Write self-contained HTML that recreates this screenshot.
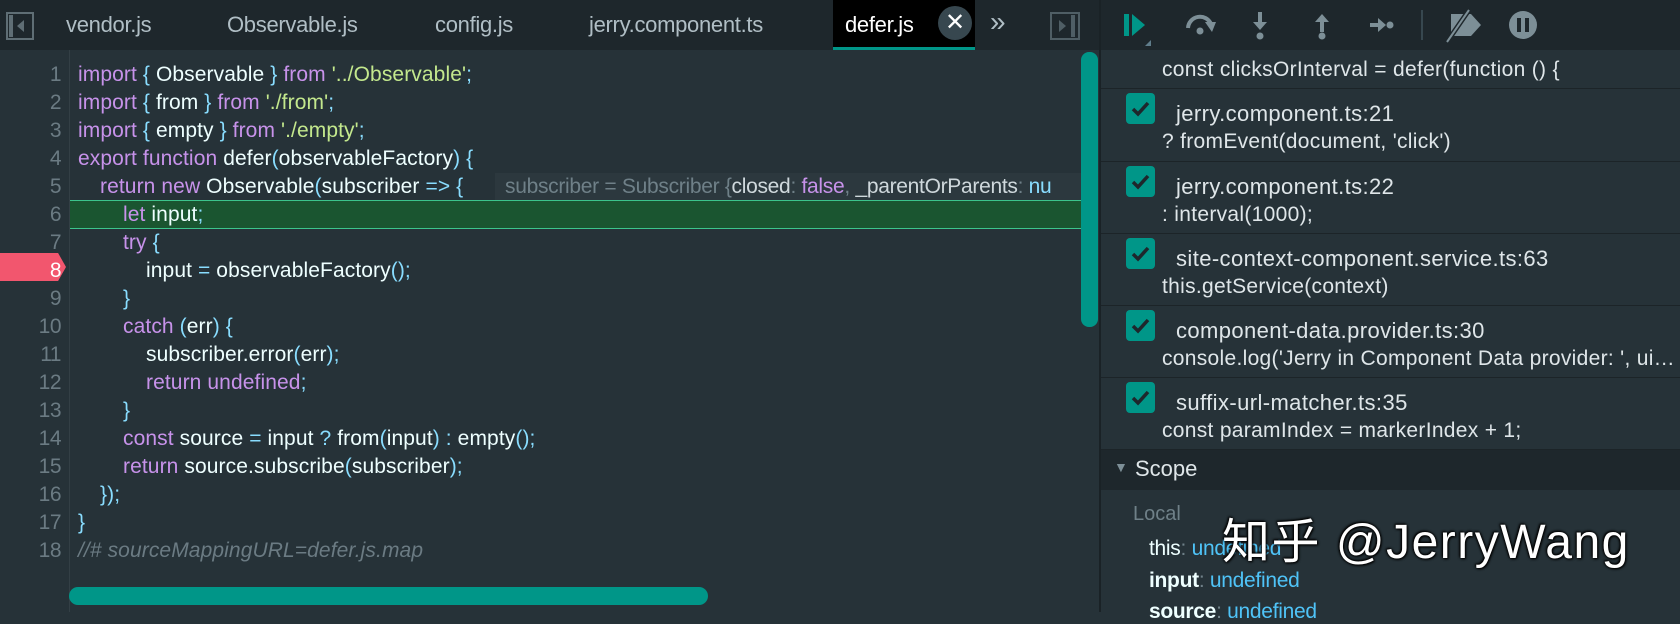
<!DOCTYPE html>
<html><head><meta charset="utf-8"><style>
*{margin:0;padding:0;box-sizing:border-box}
body{width:1680px;height:612px;overflow:hidden;background:#263238;font-family:"Liberation Sans",sans-serif;position:relative;color:#eeffff}
.abs{position:absolute}
#tabs{left:0;top:0;width:1099px;height:50px;background:#1e272c}
.tab{position:absolute;top:12px;font-size:22px;color:#b0bec5;letter-spacing:-0.3px}
#active{left:833px;top:0;width:142px;height:50px;background:#000;border-bottom:3px solid #009688}
#code{left:0;top:50px;width:1099px;height:562px;background:#263238}
.ln{position:absolute;left:0;width:61px;text-align:right;font-size:21px;color:#6b7b83;letter-spacing:-0.5px}
.cl{position:absolute;left:78px;font-size:21px;white-space:pre;letter-spacing:0.1px;color:#eeffff}
.k{color:#c792ea}.s{color:#c3e88d}.p{color:#89ddff}.c{color:#6b7b83;font-style:italic}
#right{left:1099px;top:0;width:581px;height:612px;background:#263238;border-left:2px solid #1a2226}
.row{position:absolute;left:0;width:581px;border-top:1px solid #1c2428}
.cb{position:absolute;left:25px;width:29px;height:31px;background:#009688;border-radius:4px}
.t1{position:absolute;left:75px;font-size:22px;color:#dfe6e9;white-space:nowrap;letter-spacing:0.4px}
.t2{position:absolute;left:61px;font-size:21px;color:#dfe6e9;white-space:nowrap;letter-spacing:0.3px}
</style></head><body>
<div id="tabs" class="abs">
 <svg class="abs" style="left:6px;top:12px" width="28" height="28"><rect x="1" y="1" width="26" height="26" fill="none" stroke="#5f6e75" stroke-width="2"/><rect x="3" y="3" width="4" height="22" fill="#5f6e75"/><path d="M18 8 L11 14 L18 20Z" fill="#5f6e75"/></svg>
 <div class="tab" style="left:66px">vendor.js</div>
 <div class="tab" style="left:227px">Observable.js</div>
 <div class="tab" style="left:435px">config.js</div>
 <div class="tab" style="left:589px">jerry.component.ts</div>
 <div id="active" class="abs">
  <div class="tab" style="left:12px;color:#fff">defer.js</div>
  <div class="abs" style="left:105px;top:6px;width:34px;height:34px;border-radius:50%;background:#37474f;color:#fff;font-size:24px;text-align:center;line-height:33px">✕</div>
 </div>
 <div class="tab" style="left:990px;top:6px;font-size:28px;color:#b0bec5">»</div>
 <svg class="abs" style="left:1050px;top:12px" width="30" height="28"><rect x="1" y="1" width="28" height="26" fill="none" stroke="#4f5e65" stroke-width="2"/><rect x="21" y="3" width="4" height="22" fill="#4f5e65"/><path d="M9 8 L16 14 L9 20Z" fill="#4f5e65"/></svg>
</div>
<div id="code" class="abs">
 <div class="abs" style="left:69px;top:0;width:1px;height:562px;background:#333f45"></div>
 <div class="abs" style="left:495px;top:123px;width:590px;height:28px;background:#2c383e"></div>
 <div class="abs" style="left:70px;top:150px;width:1011px;height:29px;background:#1a5530;border-top:1px solid #3cc48c;border-bottom:1px solid #3cc48c"></div>
 <div class="abs" style="left:0;top:203px;width:66px;height:28px;background:#f2566e;clip-path:polygon(0 0,88% 0,100% 50%,88% 100%,0 100%)"></div>
 <div class="abs" style="left:1081px;top:2px;width:17px;height:275px;background:#009688;border-radius:8px"></div>
 <div class="abs" style="left:69px;top:537px;width:639px;height:18px;background:#009688;border-radius:9px"></div>
</div>
<div id="lines">
<div class="ln" style="top:63px">1</div><div class="cl" style="top:63px"><span class="k">import</span> <span class="p">{</span> Observable <span class="p">}</span> <span class="k">from</span> <span class="s">'../Observable'</span><span class="p">;</span></div>
<div class="ln" style="top:91px">2</div><div class="cl" style="top:91px"><span class="k">import</span> <span class="p">{</span> from <span class="p">}</span> <span class="k">from</span> <span class="s">'./from'</span><span class="p">;</span></div>
<div class="ln" style="top:119px">3</div><div class="cl" style="top:119px"><span class="k">import</span> <span class="p">{</span> empty <span class="p">}</span> <span class="k">from</span> <span class="s">'./empty'</span><span class="p">;</span></div>
<div class="ln" style="top:147px">4</div><div class="cl" style="top:147px"><span class="k">export function</span> defer<span class="p">(</span>observableFactory<span class="p">) {</span></div>
<div class="ln" style="top:175px">5</div><div class="cl" style="top:175px;left:100px"><span class="k">return new</span> Observable<span class="p">(</span>subscriber <span class="p">=&gt; {</span></div>
<div class="cl" style="top:175px;left:505px;color:#6f8088;letter-spacing:-0.3px">subscriber = Subscriber <span class="p" style="color:#6f8088">{</span><span style="color:#cfd8dc">closed</span>: <span class="k">false</span>, <span style="color:#cfd8dc">_parentOrParents</span>: <span style="color:#89ddff">nu</span></div>
<div class="ln" style="top:203px">6</div><div class="cl" style="top:203px;left:123px"><span class="k">let</span> input<span class="p">;</span></div>
<div class="ln" style="top:231px">7</div><div class="cl" style="top:231px;left:123px"><span class="k">try</span> <span class="p">{</span></div>
<div class="ln" style="top:259px;color:#fff">8</div><div class="cl" style="top:259px;left:146px">input <span class="p">=</span> observableFactory<span class="p">();</span></div>
<div class="ln" style="top:287px">9</div><div class="cl" style="top:287px;left:123px"><span class="p">}</span></div>
<div class="ln" style="top:315px">10</div><div class="cl" style="top:315px;left:123px"><span class="k">catch</span> <span class="p">(</span>err<span class="p">) {</span></div>
<div class="ln" style="top:343px">11</div><div class="cl" style="top:343px;left:146px">subscriber.error<span class="p">(</span>err<span class="p">);</span></div>
<div class="ln" style="top:371px">12</div><div class="cl" style="top:371px;left:146px"><span class="k">return undefined</span><span class="p">;</span></div>
<div class="ln" style="top:399px">13</div><div class="cl" style="top:399px;left:123px"><span class="p">}</span></div>
<div class="ln" style="top:427px">14</div><div class="cl" style="top:427px;left:123px"><span class="k">const</span> source <span class="p">=</span> input <span class="p">?</span> from<span class="p">(</span>input<span class="p">) :</span> empty<span class="p">();</span></div>
<div class="ln" style="top:455px">15</div><div class="cl" style="top:455px;left:123px"><span class="k">return</span> source.subscribe<span class="p">(</span>subscriber<span class="p">);</span></div>
<div class="ln" style="top:483px">16</div><div class="cl" style="top:483px;left:100px"><span class="p">});</span></div>
<div class="ln" style="top:511px">17</div><div class="cl" style="top:511px"><span class="p">}</span></div>
<div class="ln" style="top:539px">18</div><div class="cl c" style="top:539px">//# sourceMappingURL=defer.js.map</div>
</div>
<div id="right" class="abs">
 <div class="abs" style="left:0;top:0;width:581px;height:50px;background:#1e272c"></div>
 <svg class="abs" style="left:0;top:0" width="581" height="50">
  <g fill="#009688"><rect x="23" y="14" width="5" height="22"/><path d="M31 14 L44 25 L31 36Z"/><path d="M50 40 L44 46 L50 46Z" fill="#607d8b"/></g>
  <g fill="none" stroke="#7d8f97" stroke-width="4"><path d="M87 28 A12 12 0 0 1 110 24"/></g><path d="M104 22 L115 22 L111 32Z" fill="#7d8f97"/><circle cx="99" cy="31" r="3.5" fill="#7d8f97"/>
  <g fill="#7d8f97"><rect x="157" y="12" width="4" height="12"/><path d="M152 22 L166 22 L159 30Z"/><circle cx="159" cy="36" r="3.5"/>
  <rect x="219" y="20" width="4" height="12"/><path d="M214 22 L228 22 L221 14Z"/><circle cx="221" cy="36" r="3.5"/>
  <rect x="269" y="23" width="10" height="4"/><path d="M277 18 L285 25 L277 32Z"/><circle cx="289" cy="25" r="3.5"/></g>
  <rect x="320" y="10" width="2" height="30" fill="#37474f"/>
  <path d="M350 14 L370 14 L380 25 L370 36 L350 36Z" fill="#7d8f97"/><path d="M346 42 L368 10" stroke="#1e272c" stroke-width="5"/><path d="M346 42 L368 10" stroke="#7d8f97" stroke-width="2"/>
  <circle cx="422" cy="25" r="14" fill="#7d8f97"/><rect x="416" y="18" width="4" height="14" fill="#1e272c"/><rect x="424" y="18" width="4" height="14" fill="#1e272c"/>
 </svg>
 <div class="t2" style="top:58px">const clicksOrInterval = defer(function () {</div>
 <div class="row" style="top:88px;height:73px"><div class="cb" style="top:4px"><svg width="29" height="31"><path d="M7 16 L12 21 L22 10" fill="none" stroke="#1e272c" stroke-width="3.5"/></svg></div><div class="t1" style="top:12px">jerry.component.ts:21</div><div class="t2" style="top:41px">? fromEvent(document, 'click')</div></div>
 <div class="row" style="top:161px;height:72px"><div class="cb" style="top:4px"><svg width="29" height="31"><path d="M7 16 L12 21 L22 10" fill="none" stroke="#1e272c" stroke-width="3.5"/></svg></div><div class="t1" style="top:12px">jerry.component.ts:22</div><div class="t2" style="top:41px">: interval(1000);</div></div>
 <div class="row" style="top:233px;height:72px"><div class="cb" style="top:4px"><svg width="29" height="31"><path d="M7 16 L12 21 L22 10" fill="none" stroke="#1e272c" stroke-width="3.5"/></svg></div><div class="t1" style="top:12px">site-context-component.service.ts:63</div><div class="t2" style="top:41px">this.getService(context)</div></div>
 <div class="row" style="top:305px;height:72px"><div class="cb" style="top:4px"><svg width="29" height="31"><path d="M7 16 L12 21 L22 10" fill="none" stroke="#1e272c" stroke-width="3.5"/></svg></div><div class="t1" style="top:12px">component-data.provider.ts:30</div><div class="t2" style="top:41px">console.log('Jerry in Component Data provider: ', ui…</div></div>
 <div class="row" style="top:377px;height:72px"><div class="cb" style="top:4px"><svg width="29" height="31"><path d="M7 16 L12 21 L22 10" fill="none" stroke="#1e272c" stroke-width="3.5"/></svg></div><div class="t1" style="top:12px">suffix-url-matcher.ts:35</div><div class="t2" style="top:41px">const paramIndex = markerIndex + 1;</div></div>
 <div class="abs" style="left:0;top:449px;width:581px;height:41px;background:#1e272c;border-top:1px solid #1c2428"></div>
 <div class="abs" style="left:13px;top:459px;font-size:14px;color:#7d8f97">▼</div>
 <div class="abs" style="left:34px;top:456px;font-size:22px;color:#dfe6e9">Scope</div>
 <div class="abs" style="left:32px;top:503px;font-size:20px;color:#6f8088">Local</div>
 <div class="abs" style="left:48px;top:537px;font-size:21px;letter-spacing:-0.3px">this<span style="color:#6f8088">:</span> <span style="color:#4fc3f7">undefined</span></div>
 <div class="abs" style="left:48px;top:569px;font-size:21px;letter-spacing:-0.3px"><b>input</b><span style="color:#6f8088">:</span> <span style="color:#4fc3f7">undefined</span></div>
 <div class="abs" style="left:48px;top:600px;font-size:21px;letter-spacing:-0.3px"><b>source</b><span style="color:#6f8088">:</span> <span style="color:#4fc3f7">undefined</span></div>
 <div class="abs" style="left:121px;top:502px;font-size:48px;letter-spacing:1.5px;color:#fff;white-space:nowrap;font-family:'Liberation Sans','Noto Sans CJK SC',sans-serif;text-shadow:0 0 3px #000,1px 1px 2px #000,-1px -1px 2px #000">知乎 @JerryWang</div>
</div>
</body></html>
